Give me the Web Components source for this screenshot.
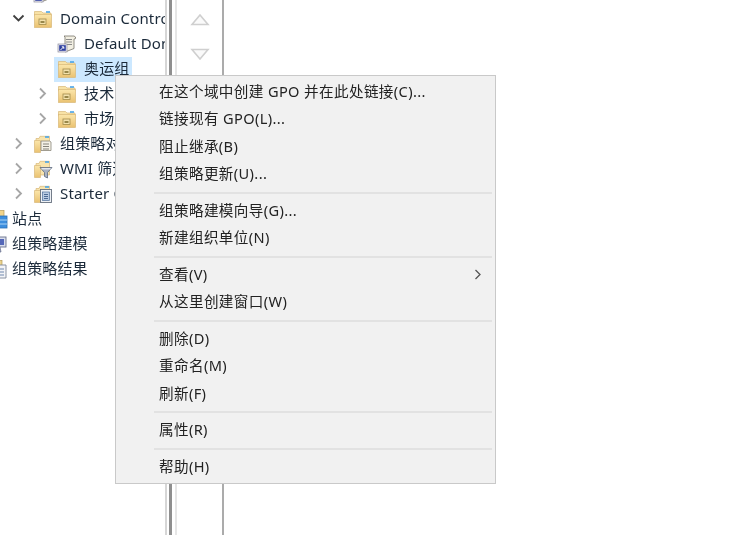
<!DOCTYPE html>
<html lang="zh">
<head>
<meta charset="utf-8">
<title>组策略管理</title>
<style>
  html, body { margin: 0; height: 100%; background: #fff; overflow: hidden; }
  body { font-family: "Noto Sans", "Noto Sans CJK SC", sans-serif; }
</style>
</head>
<body>
<gp-console>
  <gp-tree slot="tree">
    <gp-tree-row level="1" icon="gpo"></gp-tree-row>
    <gp-tree-row level="1" caret="down" icon="folder" label="Domain Controllers"></gp-tree-row>
    <gp-tree-row level="2" icon="gpo" label="Default Domain Controllers Policy"></gp-tree-row>
    <gp-tree-row level="2" icon="folder" label="奥运组" selected></gp-tree-row>
    <gp-tree-row level="2" caret="right" icon="folder" label="技术部"></gp-tree-row>
    <gp-tree-row level="2" caret="right" icon="folder" label="市场部"></gp-tree-row>
    <gp-tree-row level="1" caret="right" icon="gpo-folder" label="组策略对象"></gp-tree-row>
    <gp-tree-row level="1" caret="right" icon="wmi" label="WMI 筛选器"></gp-tree-row>
    <gp-tree-row level="1" caret="right" icon="starter" label="Starter GPO"></gp-tree-row>
    <gp-tree-row level="0" icon="sites" label="站点"></gp-tree-row>
    <gp-tree-row level="0" icon="modeling" label="组策略建模"></gp-tree-row>
    <gp-tree-row level="0" icon="results" label="组策略结果"></gp-tree-row>
  </gp-tree>
  <gp-menu slot="menu">
    <gp-menu-item>在这个域中创建 GPO 并在此处链接(C)...</gp-menu-item>
    <gp-menu-item>链接现有 GPO(L)...</gp-menu-item>
    <gp-menu-item>阻止继承(B)</gp-menu-item>
    <gp-menu-item>组策略更新(U)...</gp-menu-item>
    <gp-menu-sep></gp-menu-sep>
    <gp-menu-item>组策略建模向导(G)...</gp-menu-item>
    <gp-menu-item>新建组织单位(N)</gp-menu-item>
    <gp-menu-sep></gp-menu-sep>
    <gp-menu-item submenu>查看(V)</gp-menu-item>
    <gp-menu-item>从这里创建窗口(W)</gp-menu-item>
    <gp-menu-sep></gp-menu-sep>
    <gp-menu-item>删除(D)</gp-menu-item>
    <gp-menu-item>重命名(M)</gp-menu-item>
    <gp-menu-item>刷新(F)</gp-menu-item>
    <gp-menu-sep></gp-menu-sep>
    <gp-menu-item>属性(R)</gp-menu-item>
    <gp-menu-sep></gp-menu-sep>
    <gp-menu-item>帮助(H)</gp-menu-item>
  </gp-menu>
</gp-console>

<script>
  const defs = `
    <defs>
      <linearGradient id="fold" x1="0" y1="0" x2="0" y2="1">
        <stop offset="0" stop-color="#fbe6ab"/><stop offset="1" stop-color="#eac271"/>
      </linearGradient>
    </defs>`;
  const folderBody = `
    <path d="M1.5 5V2.5h7l1.5 1.5h8V7H1.5z" fill="#f8e2a6" stroke="#d9b878" stroke-width=".7"/>
    <rect x="13" y="2.2" width="4" height="1.6" fill="#4aa5e8"/>
    <rect x="1.5" y="5.5" width="17" height="13" fill="url(#fold)" stroke="#d9b878" stroke-width=".7"/>`;
  const openFolder = `
    <path d="M3 4.5h3l1-2.2h9.5V16H3z" fill="#f8e4ad" stroke="#d9b878" stroke-width=".7"/>
    <rect x="12" y="2.2" width="4" height="1.6" fill="#4aa5e8"/>
    <path d="M1.5 6.5h6V18.5h-6z" fill="url(#fold)" stroke="#d9b878" stroke-width=".7"/>`;

  const icons = {
    folder: folderBody + `
      <rect x="6" y="10" width="7" height="5.5" fill="#f4e2ad" stroke="#a08a4a" stroke-width=".8"/>
      <rect x="7.5" y="12" width="4" height="2" fill="#98874a"/>`,
    gpo: `
      <path d="M7 2h10l1.5 1v1.6L17 5v9.5L8 18V3z" fill="#f2efe2" stroke="#77736a" stroke-width=".8"/>
      <path d="M9 5.5h6M9 8h6M9 10.5h6" stroke="#8b8b8b" stroke-width="1"/>
      <rect x="1" y="10" width="9" height="8" fill="#e8e8f2" stroke="#8f8f9f" stroke-width=".7"/>
      <rect x="2.2" y="11.2" width="6.6" height="5.6" fill="#2c3e9e"/>
      <path d="M3.5 16l3-3M4.8 12.8h2v2" stroke="#fff" stroke-width="1" fill="none"/>`,
    'gpo-folder': openFolder + `
      <path d="M8 7h8.5l1.5 1v8.5H8z" fill="#f4f1e6" stroke="#8c887c" stroke-width=".8"/>
      <path d="M10 10h6M10 12.5h6M10 15h6" stroke="#85837a" stroke-width="1"/>`,
    wmi: openFolder + `
      <path d="M7 8.5h12l-4.5 5V19l-3-1.5v-4z" fill="#aab3c2" stroke="#5e6b7f" stroke-width=".8"/>
      <rect x="8.5" y="9" width="9" height="1.4" fill="#e3e7ee"/>`,
    starter: openFolder + `
      <rect x="7.5" y="5.5" width="11" height="13" fill="#eef1f5" stroke="#66707e" stroke-width=".9"/>
      <rect x="9.5" y="8" width="7" height="8.5" fill="#b9cbe2" stroke="#4f6f9a" stroke-width=".7"/>
      <path d="M11 10.5h4M11 12.5h4M11 14.5h4" stroke="#3f5f8a" stroke-width=".9"/>`,
    sites: `
      <rect x="11" y="1.5" width="8" height="6" fill="#f2d48a" stroke="#b69a57" stroke-width=".7"/>
      <rect x="6" y="7" width="16" height="12" fill="#3d8ede" stroke="#2a6fb5" stroke-width=".8"/>
      <path d="M6 11h16M6 15h16" stroke="#a9d3f5" stroke-width="1"/>`,
    modeling: `
      <rect x="7" y="3" width="14" height="10" fill="#d9deec" stroke="#68708c" stroke-width=".9"/>
      <rect x="9" y="5" width="10" height="6" fill="#5568b8"/>
      <path d="M10 13l-1 5h7l-1-5z" fill="#9aa3bd" stroke="#68708c" stroke-width=".7"/>`,
    results: `
      <rect x="11" y="1.5" width="6" height="5" fill="#ecd48e" stroke="#b69a57" stroke-width=".7"/>
      <path d="M8 6h13v13H8z" fill="#f3f4f7" stroke="#80889a" stroke-width=".9"/>
      <path d="M11 10h8M11 13h8M11 16h8" stroke="#6f87ad" stroke-width="1"/>`
  };

  class GpIcon extends HTMLElement {
    connectedCallback() {
      const type = this.getAttribute('type');
      this.attachShadow({ mode: 'open' });
      this.shadowRoot.innerHTML = `
        <style>
          :host { display: block; width: 20px; height: 20px; flex: none; margin-top: -2px; }
          svg { display: block; overflow: visible; }
        </style>
        <svg width="20" height="20" viewBox="0 0 20 20">${defs}${icons[type] || ''}</svg>
      `;
    }
  }

  class GpTreeRow extends HTMLElement {
    connectedCallback() {
      const caret = this.getAttribute('caret');
      const label = this.getAttribute('label') || '';
      let chevron = '';
      if (caret === 'right') chevron = '<path d="M4 1.5l5 5-5 5" fill="none" stroke="#a6a6a6" stroke-width="1.8"/>';
      if (caret === 'down') chevron = '<path d="M1.5 3.5l5 5 5-5" fill="none" stroke="#404040" stroke-width="1.8"/>';
      this.attachShadow({ mode: 'open' });
      this.shadowRoot.innerHTML = `
        <style>
          :host { display: flex; align-items: center; height: 25px; white-space: nowrap; }
          :host([level="0"]) { margin-left: -42px; }
          :host([level="1"]) { margin-left: 6px; }
          :host([level="2"]) { margin-left: 30px; }
          .caret { width: 24px; height: 25px; flex: none; display: flex; align-items: center; justify-content: center; margin-top: -2px; }
          .entry { display: flex; align-items: center; height: 25px; padding: 0 3px; }
          :host([selected]) .entry { background: #cce8ff; }
          .text { margin-left: 7px; padding-bottom: 4px; font-size: 15px; letter-spacing: .15px; color: #1b2a3a; }
        </style>
        <span class="caret">${chevron ? `<svg width="13" height="13" viewBox="0 0 13 13">${chevron}</svg>` : ''}</span>
        <span class="entry">
          <gp-icon type="${this.getAttribute('icon')}"></gp-icon>
          <span class="text">${label}</span>
        </span>
      `;
    }
  }

  class GpTree extends HTMLElement {
    constructor() {
      super();
      this.attachShadow({ mode: 'open' });
      this.shadowRoot.innerHTML = `
        <style>
          :host { display: block; width: 165px; flex: none; overflow: hidden; }
          .rows { margin-top: -18px; }
        </style>
        <div class="rows"><slot></slot></div>
      `;
    }
  }

  class GpMenuItem extends HTMLElement {
    connectedCallback() {
      const arrow = this.hasAttribute('submenu')
        ? '<svg class="arrow" width="8" height="11" viewBox="0 0 8 11"><path d="M1.5 1l4.5 4.5L1.5 10" fill="none" stroke="#555" stroke-width="1.3"/></svg>'
        : '';
      this.attachShadow({ mode: 'open' });
      this.shadowRoot.innerHTML = `
        <style>
          :host { display: flex; align-items: center; justify-content: space-between; height: 27.5px; padding: 0 13px 0 43px; font-size: 14.6px; letter-spacing: .37px; color: #222; white-space: nowrap; }
          span { padding-bottom: 3px; }
        </style>
        <span><slot></slot></span>${arrow}
      `;
    }
  }

  class GpMenuSep extends HTMLElement {
    constructor() {
      super();
      this.attachShadow({ mode: 'open' });
      this.shadowRoot.innerHTML = `
        <style>
          :host { display: flex; align-items: center; height: 9px; padding: 0 3px 0 38px; }
          i { display: block; height: 2px; width: 100%; background: #e2e2e2; }
        </style>
        <i></i>
      `;
    }
  }

  class GpMenu extends HTMLElement {
    constructor() {
      super();
      this.attachShadow({ mode: 'open' });
      this.shadowRoot.innerHTML = `
        <style>
          :host { display: block; position: absolute; left: 115px; top: 75px; width: 379px; height: 405px; padding-top: 2px; background: #f1f1f1; border: 1px solid #c9c9c9; }
        </style>
        <slot></slot>
      `;
    }
  }

  class GpConsole extends HTMLElement {
    constructor() {
      super();
      this.attachShadow({ mode: 'open' });
      this.shadowRoot.innerHTML = `
        <style>
          :host { display: flex; height: 535px; position: relative; overflow: hidden; background: #fff; filter: blur(.3px); }
          .splitter { width: 12px; flex: none; box-sizing: border-box; border-left: 2px solid #d6d6d6; border-right: 2px solid #e6e6e6; display: flex; justify-content: center; }
          .splitter i { display: block; width: 3px; background: #8f8f8f; margin-left: -1px; }
          .actions { width: 47px; flex: none; box-sizing: border-box; border-right: 2px solid #ababab; display: flex; flex-direction: column; align-items: center; gap: 22px; padding-top: 14px; }
          .actions svg { display: block; }
        </style>
        <slot name="tree"></slot>
        <div class="splitter"><i></i></div>
        <div class="actions">
          <svg width="20" height="12" viewBox="0 0 20 12"><path d="M10 1L18 10.5H2z" fill="#fafafa" stroke="#cfcfcf" stroke-width="1.6"/></svg>
          <svg width="20" height="12" viewBox="0 0 20 12"><path d="M10 11L18 1.5H2z" fill="#fafafa" stroke="#cfcfcf" stroke-width="1.6"/></svg>
        </div>
        <slot name="menu"></slot>
      `;
    }
  }

  customElements.define('gp-icon', GpIcon);
  customElements.define('gp-tree-row', GpTreeRow);
  customElements.define('gp-tree', GpTree);
  customElements.define('gp-menu-item', GpMenuItem);
  customElements.define('gp-menu-sep', GpMenuSep);
  customElements.define('gp-menu', GpMenu);
  customElements.define('gp-console', GpConsole);
</script>
</body>
</html>
